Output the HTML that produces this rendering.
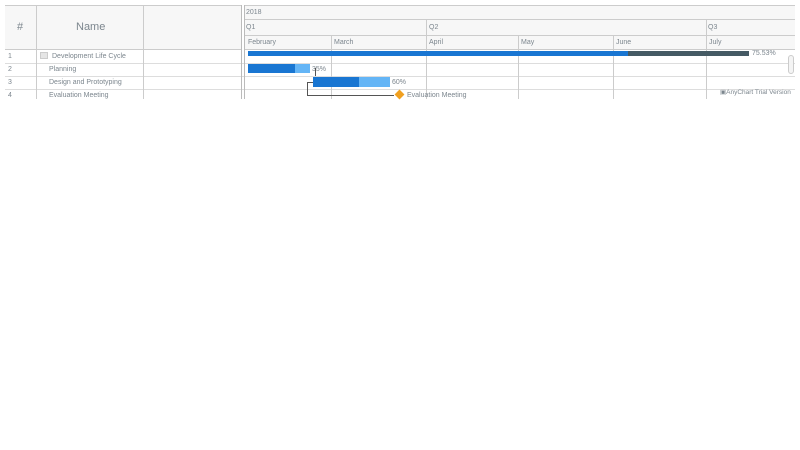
<!DOCTYPE html><html><head><style>
body{margin:0;width:800px;height:450px;background:#fff;font-family:"Liberation Sans",sans-serif;overflow:hidden;position:relative}
div{position:absolute;box-sizing:border-box}
.t{font-size:7px;color:#7c868e;white-space:nowrap}
.h{background:#f7f7f7}
.vl{width:1px;background:#ccc}
.hl{height:1px;background:#ddd}
</style></head><body>
<div class="h" style="left:5px;top:5px;width:237px;height:44px;border-top:1px solid #ccc"></div>
<div class="h" style="left:244px;top:5px;width:551px;height:44px;border-top:1px solid #ccc"></div>
<div class="hl" style="left:5px;top:49px;width:237px;background:#ccc"></div>
<div class="hl" style="left:244px;top:19px;width:551px;background:#ccc"></div>
<div class="hl" style="left:244px;top:35px;width:551px;background:#ccc"></div>
<div class="hl" style="left:244px;top:49px;width:551px;background:#ccc"></div>
<div class="hl" style="left:5px;top:63px;width:790px"></div>
<div class="hl" style="left:5px;top:76px;width:790px"></div>
<div class="hl" style="left:5px;top:89px;width:790px"></div>
<div class="vl" style="left:36px;top:5px;height:94px"></div>
<div class="vl" style="left:143px;top:5px;height:94px"></div>
<div class="vl" style="left:241px;top:5px;height:94px;background:#bbb"></div>
<div class="vl" style="left:244px;top:5px;height:94px;background:#bbb"></div>
<div class="vl" style="left:331px;top:35px;height:64px"></div>
<div class="vl" style="left:426px;top:19px;height:80px"></div>
<div class="vl" style="left:518px;top:35px;height:64px"></div>
<div class="vl" style="left:613px;top:35px;height:64px"></div>
<div class="vl" style="left:706px;top:19px;height:80px"></div>
<div class="t" style="left:17px;top:21px;font-size:11px">#</div>
<div class="t" style="left:76px;top:21px;font-size:11px">Name</div>
<div class="t" style="left:246px;top:9px">2018</div>
<div class="t" style="left:246px;top:24px">Q1</div>
<div class="t" style="left:429px;top:24px">Q2</div>
<div class="t" style="left:708px;top:24px">Q3</div>
<div class="t" style="left:248px;top:39px">February</div>
<div class="t" style="left:334px;top:39px">March</div>
<div class="t" style="left:429px;top:39px">April</div>
<div class="t" style="left:521px;top:39px">May</div>
<div class="t" style="left:616px;top:39px">June</div>
<div class="t" style="left:709px;top:39px">July</div>
<div class="t" style="left:8px;top:53px">1</div><div class="t" style="left:8px;top:66px">2</div><div class="t" style="left:8px;top:79px">3</div><div class="t" style="left:8px;top:92px">4</div>
<div style="left:40px;top:52px;width:8px;height:7px;background:#e5e5e5;border:1px solid #ccc"></div>
<div class="t" style="left:52px;top:53px">Development Life Cycle</div>
<div class="t" style="left:49px;top:66px">Planning</div>
<div class="t" style="left:49px;top:79px">Design and Prototyping</div>
<div class="t" style="left:49px;top:92px">Evaluation Meeting</div>
<div style="left:248px;top:51px;width:380px;height:5px;background:#1976d2"></div>
<div style="left:628px;top:51px;width:121px;height:5px;background:#455a64"></div>
<div class="t" style="left:752px;top:50px">75.53%</div>
<div style="left:248px;top:64px;width:47px;height:9px;background:#1976d2"></div>
<div style="left:295px;top:64px;width:15px;height:9px;background:#64b5f6"></div>
<div class="t" style="left:312px;top:66px">35%</div>
<div style="left:313px;top:77px;width:46px;height:10px;background:#1976d2"></div>
<div style="left:359px;top:77px;width:31px;height:10px;background:#64b5f6"></div>
<div class="t" style="left:392px;top:79px">60%</div>
<div style="left:315px;top:68px;width:1px;height:8px;background:#555"></div>
<div style="left:307px;top:82px;width:6px;height:1px;background:#555"></div>
<div style="left:307px;top:82px;width:1px;height:14px;background:#555"></div>
<div style="left:307px;top:95px;width:87px;height:1px;background:#555"></div>
<div style="left:396px;top:91px;width:7px;height:7px;background:#f0a020;transform:rotate(45deg)"></div>
<div class="t" style="left:407px;top:92px">Evaluation Meeting</div>
<div style="left:788px;top:55px;width:6px;height:19px;border:1px solid #ccc;border-radius:3px;background:#f4f4f4"></div>
<div class="t" style="left:720px;top:88px;font-size:6.5px">▣AnyChart Trial Version</div>
</body></html>
